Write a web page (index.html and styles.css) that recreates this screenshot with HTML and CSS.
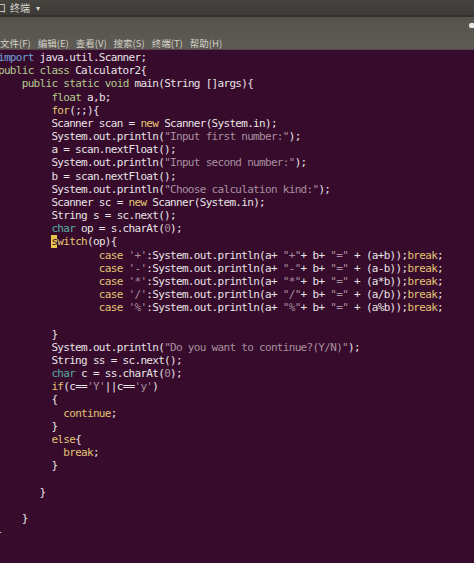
FILE: index.html
```html
<!DOCTYPE html>
<html lang="zh">
<head>
  <meta charset="UTF-8" />
  <title>终端</title>
  <link rel="stylesheet" href="styles.css">
</head>
<body>
  <div class="window">
    <header class="topbar">
      <span class="app-icon">口</span>
      <span class="title">终端</span>
      <span class="caret">▾</span>
    </header>
    <div class="menubar">
      <nav class="menu">
        <span>文件(F)</span>
        <span>编辑(E)</span>
        <span>查看(V)</span>
        <span>搜索(S)</span>
        <span>终端(T)</span>
        <span>帮助(H)</span>
      </nav>
      <span class="corner"></span>
    </div>
<pre class="code"><span class="imp">import</span> java.util.Scanner;
<span class="kw">public</span> <span class="kw">class</span> Calculator2{
    <span class="kw">public</span> <span class="kw">static</span> <span class="kw">void</span> main(String []args){
         <span class="kw">float</span> a,b;
         <span class="ctl">for</span>(;;){
         Scanner scan = <span class="ctl">new</span> Scanner(System.in);
         System.out.println(<span class="str">"Input first number:"</span>);
         a = scan.nextFloat();
         System.out.println(<span class="str">"Input second number:"</span>);
         b = scan.nextFloat();
         System.out.println(<span class="str">"Choose calculation kind:"</span>);
         Scanner sc = <span class="ctl">new</span> Scanner(System.in);
         String s = sc.next();
         <span class="type">char</span> op = s.charAt(<span class="str">0</span>);
         <span class="ctl"><span class="cursor">s</span>witch</span>(op){
                 <span class="ctl">case</span> <span class="str">'+'</span>:System.out.println(a+ <span class="str">"+"</span>+ b+ <span class="str">"="</span> + (a+b));<span class="ctl">break</span>;
                 <span class="ctl">case</span> <span class="str">'-'</span>:System.out.println(a+ <span class="str">"-"</span>+ b+ <span class="str">"="</span> + (a-b));<span class="ctl">break</span>;
                 <span class="ctl">case</span> <span class="str">'*'</span>:System.out.println(a+ <span class="str">"*"</span>+ b+ <span class="str">"="</span> + (a*b));<span class="ctl">break</span>;
                 <span class="ctl">case</span> <span class="str">'/'</span>:System.out.println(a+ <span class="str">"/"</span>+ b+ <span class="str">"="</span> + (a/b));<span class="ctl">break</span>;
                 <span class="ctl">case</span> <span class="str">'%'</span>:System.out.println(a+ <span class="str">"%"</span>+ b+ <span class="str">"="</span> + (a%b));<span class="ctl">break</span>;

         }
         System.out.println(<span class="str">"Do you want to continue?(Y/N)"</span>);
         String ss = sc.next();
         <span class="type">char</span> c = ss.charAt(<span class="str">0</span>);
         <span class="ctl">if</span>(c==<span class="str">'Y'</span>||c==<span class="str">'y'</span>)
         {
           <span class="ctl">continue</span>;
         }
         <span class="ctl">else</span>{
           <span class="ctl">break</span>;
         }

       }

    }
<span class="edge">+</span>
<span class="edge">-</span></pre>
  </div>
</body>
</html>
```

FILE: styles.css
```css
body {
  margin: 0;
  background-color: #370b2c;
  overflow: hidden;
}

.window {
  display: flex;
  flex-direction: column;
  height: 563px;
}

.topbar {
  height: 15px;
  display: flex;
  align-items: center;
  gap: 4px;
  padding-left: 0;
  background: linear-gradient(#45443f, #3b3a36);
  border-bottom: 2px solid #33322e;
  font-family: "Noto Sans CJK SC", "Noto Sans", sans-serif;
  font-size: 10px;
  color: #dcd8d0;
}

.app-icon {
  margin-left: -4px;
}

.caret {
  font-size: 8px;
  margin-left: 2px;
}

.menubar {
  height: 32px;
  display: flex;
  justify-content: space-between;
  background: linear-gradient(#55534d, #5d5b53);
  border-bottom: 1px solid #5b4352;
}

.menu {
  display: flex;
  gap: 7px;
  padding-top: 20px;
  font-family: "Noto Sans CJK SC", "Noto Sans", sans-serif;
  font-size: 9.5px;
  line-height: 12px;
  color: #d4d0c8;
}

.corner {
  width: 5px;
  height: 5px;
  margin-top: 6px;
  background-color: #e8e6e2;
  border-radius: 2px 0 0 2px;
}

.code {
  flex: 1;
  margin: 0 0 0 -2px;
  padding-top: 1px;
  font-family: "DejaVu Sans Mono", monospace;
  font-size: 11px;
  line-height: 13.17px;
  letter-spacing: -0.69px;
  color: #e8e3e6;
  background-color: #370b2c;
}

.imp {
  color: #6da2d6;
}

.kw {
  color: #b3cc8c;
}

.type {
  color: #58aca2;
}

.ctl {
  color: #e2c374;
}

.str {
  color: #a8909f;
}

.cursor {
  background-color: #e6c64a;
  color: #3a0c2e;
}

.edge {
  margin-left: -2px;
  font-size: 9px;
}
```
